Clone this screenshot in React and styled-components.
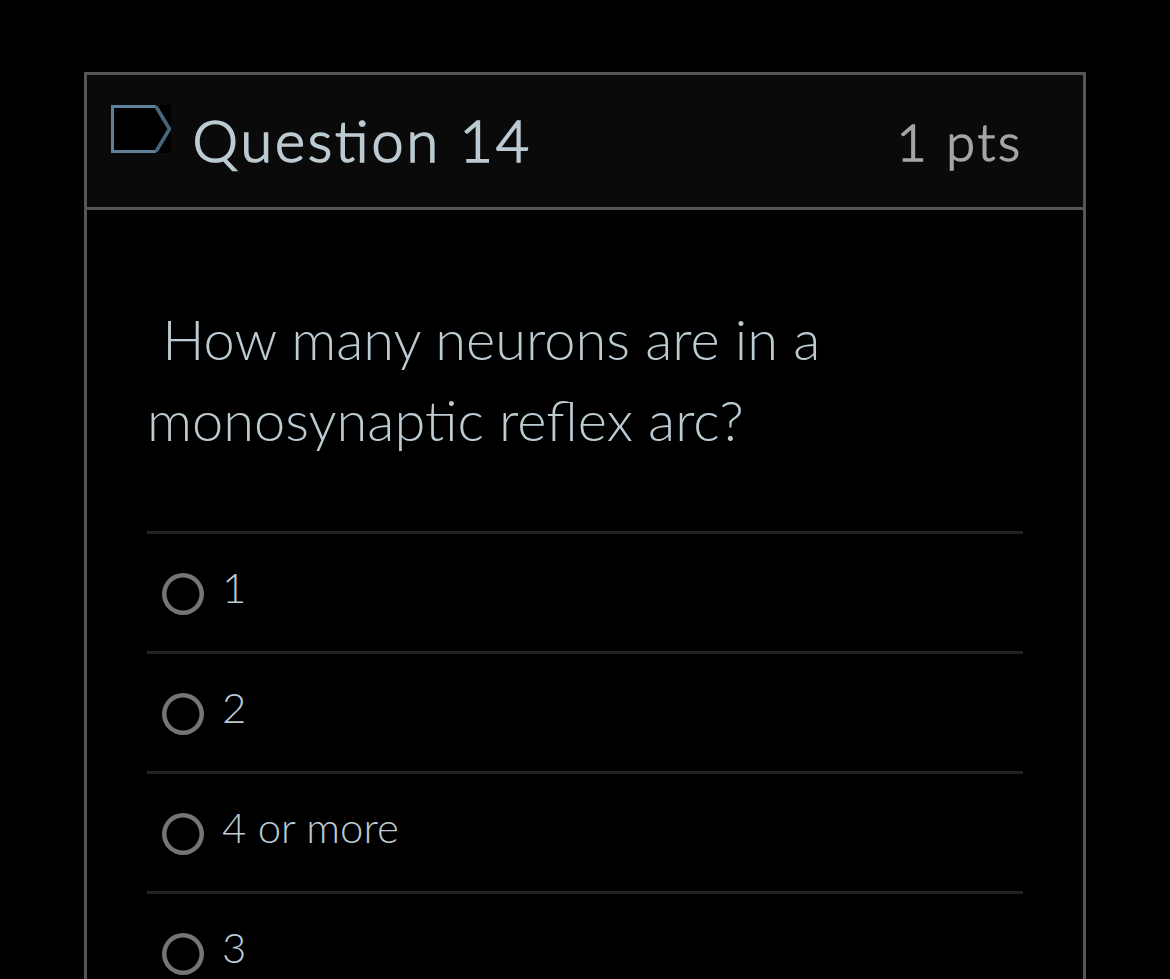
import React from 'react';
import styled, { createGlobalStyle } from 'styled-components';

const GlobalStyle = createGlobalStyle`
  body {
    margin: 0;
    background-color: #000000;
    font-family: Lato, sans-serif;
    overflow: hidden;
  }
`;

const Page = styled.div`
  box-sizing: border-box;
  height: 979px;
  padding: 72px 84px 0;
  overflow: hidden;
`;

const Card = styled.section`
  box-sizing: border-box;
  height: 1040px;
  border: 3px solid #555555;
`;

const Header = styled.header`
  box-sizing: border-box;
  height: 135px;
  display: flex;
  align-items: flex-start;
  padding: 0 60px 0 24px;
  background-color: #0a0a0a;
  border-bottom: 3px solid #555555;
`;

const Flag = styled.svg`
  width: 60px;
  height: 48px;
  margin-top: 30px;
  flex: none;
`;

const Title = styled.h1`
  flex: 1;
  margin: 0 0 0 21.5px;
  font-size: 57.5px;
  font-weight: 300;
  line-height: 129px;
  letter-spacing: 2.9px;
  font-feature-settings: 'liga' 1;
  -webkit-text-stroke: 1.7px #bccad2;
  color: #bccad2;
`;

const Points = styled.span`
  font-size: 52px;
  font-weight: 300;
  line-height: 132px;
  letter-spacing: 2.8px;
  -webkit-text-stroke: 1.5px #a5a5a5;
  color: #a5a5a5;
`;

const Body = styled.div`
  padding: 88px 60px 0;
`;

const Prompt = styled.p`
  margin: 0;
  font-size: 55.95px;
  font-weight: 300;
  line-height: 81px;
  white-space: pre;
  color: #bccad2;
`;

const Answers = styled.div`
  margin-top: 71px;
`;

const Answer = styled.label`
  box-sizing: border-box;
  height: 120px;
  display: flex;
  align-items: flex-start;
  padding-left: 15px;
  border-top: 3px solid #232323;
`;

const Radio = styled.input`
  appearance: none;
  box-sizing: border-box;
  width: 42px;
  height: 42px;
  margin: 39px 0 0;
  box-shadow: inset 0 0 0 4.5px #757575;
  border-radius: 50%;
  flex: none;
`;

const AnswerText = styled.span`
  margin: 23px 0 0 18px;
  font-size: 41.9px;
  font-weight: 300;
  line-height: 60px;
  color: #bccad2;
`;

const answers = ['1', '2', '4 or more', '3'];

const App = () => {
  return (
    <Page>
      <GlobalStyle />
      <Card>
        <Header>
          <Flag viewBox='0 0 60 48' fill='none'>
            <rect width='60' height='48' fill='#000000' />
            <path d='M45 1.5H1.5V46.5H45' stroke='#5d8198' strokeWidth='3' />
            <path d='M45 1.5L58.5 24L45 46.5' stroke='#48677b' strokeWidth='3.5' />
          </Flag>
          <Title>Question 14</Title>
          <Points>1 pts</Points>
        </Header>
        <Body>
          <Prompt>{' How many neurons are in a\nmonosynaptic reflex arc?'}</Prompt>
          <Answers>
            {answers.map((el) => {
              return (
                <Answer key={el}>
                  <Radio type='radio' name='answer' />
                  <AnswerText>{el}</AnswerText>
                </Answer>
              );
            })}
          </Answers>
        </Body>
      </Card>
    </Page>
  );
};

export default App;
